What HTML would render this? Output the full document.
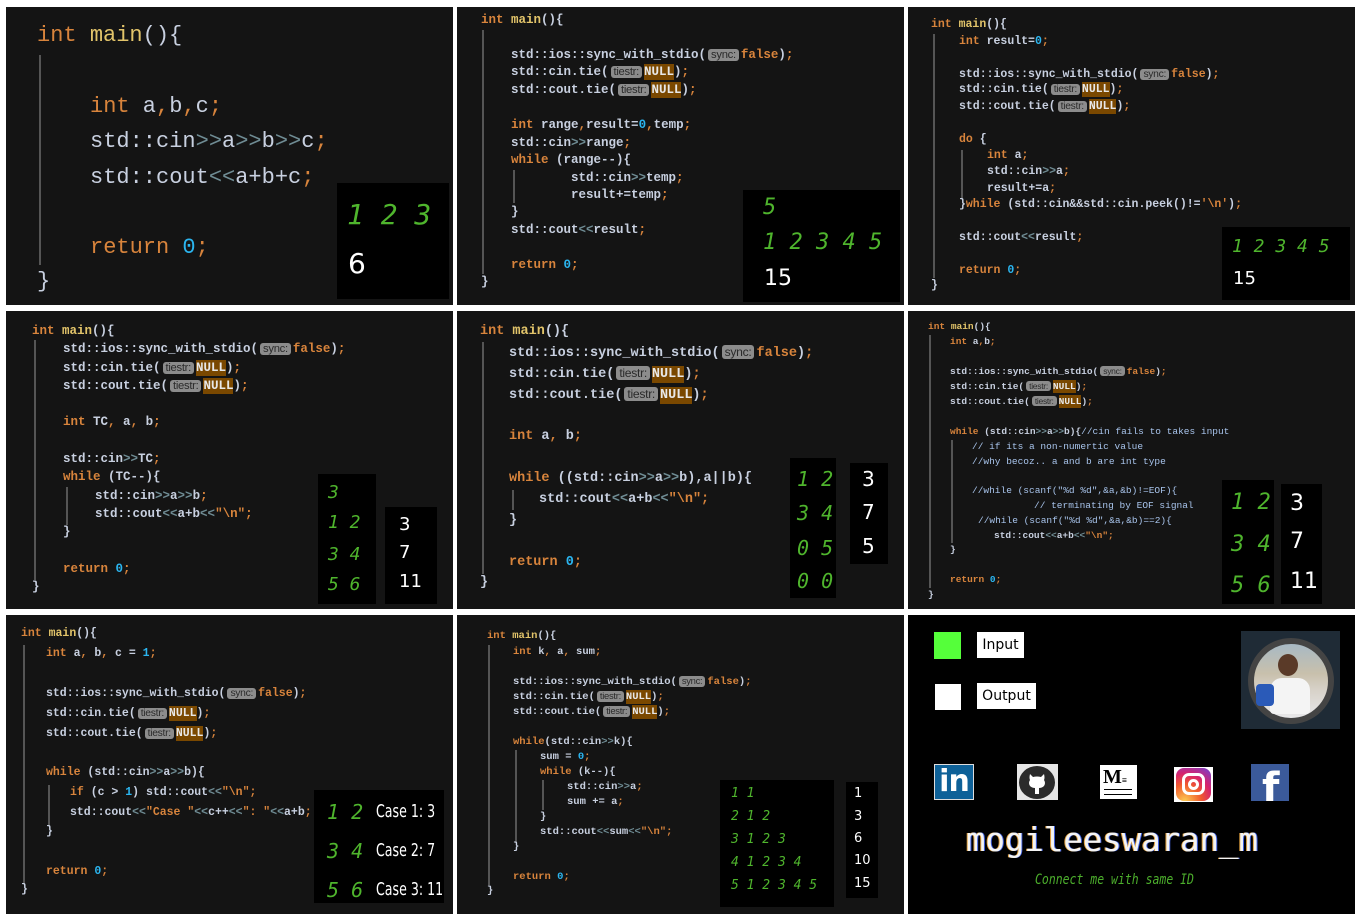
<!DOCTYPE html>
<html><head><meta charset="utf-8"><style>
*{margin:0;padding:0;box-sizing:border-box}
body{width:1358px;height:921px;background:#fff;position:relative;overflow:hidden;font-family:"Liberation Mono",monospace;color:#c8d0e0}
.pn{position:absolute;background:#141414}
.l{position:absolute;white-space:pre;font-family:"Liberation Mono",monospace;font-weight:bold}
.k{color:#d8843c}.f{color:#e2c46a}.o{color:#6f8c94}.n{color:#2bb5ef}.p{color:#d8843c}.c{color:#a8c4ec;font-weight:normal}.g{color:#e2e2e2}
.pill{background:#8c8c8c;color:#2a2a2a;border-radius:3px;font-family:"Liberation Sans",sans-serif;font-weight:normal;font-size:0.9em;padding:0 3px;letter-spacing:-0.3px;margin:0 2px}
.nul{background:#7a4800;color:#e8e8e8;padding:1px 0}
.vl{position:absolute;width:2px;background:#555}
.box{position:absolute;background:#000}
.gr{position:absolute;color:#4fb52d;font-family:"DejaVu Sans Mono",monospace;white-space:pre;font-style:italic}
.wt{position:absolute;color:#fff;font-family:"DejaVu Sans",sans-serif;white-space:pre}
</style></head><body>

<!-- Panel 1 -->
<div class="pn" style="left:6px;top:7px;width:447px;height:298px"></div>
<div class="vl" style="left:39px;top:55px;height:210px"></div>
<div class="l" style="left:37px;top:23px;font-size:22px;font-weight:normal"><span class="k">int</span> <span class="f">main</span>(){</div>
<div class="l" style="left:90px;top:94px;font-size:22px;font-weight:normal"><span class="k">int</span> a<span class="p">,</span>b<span class="p">,</span>c<span class="p">;</span></div>
<div class="l" style="left:90px;top:129px;font-size:22px;font-weight:normal">std::cin<span class="o">&gt;&gt;</span>a<span class="o">&gt;&gt;</span>b<span class="o">&gt;&gt;</span>c<span class="p">;</span></div>
<div class="l" style="left:90px;top:165px;font-size:22px;font-weight:normal">std::cout<span class="o">&lt;&lt;</span>a+b+c<span class="p">;</span></div>
<div class="l" style="left:90px;top:235px;font-size:22px;font-weight:normal"><span class="k">return</span> <span class="n">0</span><span class="p">;</span></div>
<div class="l" style="left:37px;top:269px;font-size:22px;font-weight:normal">}</div>
<div class="box" style="left:337px;top:183px;width:112px;height:116px"></div>
<div class="gr" style="left:347px;top:198px;font-size:28px">1 2 3</div>
<div class="wt" style="left:348px;top:247px;font-size:28px">6</div>

<!-- Panel 2 -->
<div class="pn" style="left:457px;top:7px;width:447px;height:298px"></div>
<div class="vl" style="left:482px;top:30px;height:244px"></div>
<div class="vl" style="left:513px;top:170px;height:33px"></div>
<div style="font-size:12.5px">
<div class="l" style="left:481px;top:13px"><span class="k">int</span> <span class="f">main</span>(){</div>
<div class="l" style="left:511px;top:48px">std::ios::sync_with_stdio(<span class="pill">sync:</span><span class="k">false</span>)<span class="p">;</span></div>
<div class="l" style="left:511px;top:65px">std::cin.tie(<span class="pill">tiestr:</span><span class="nul">NULL</span>)<span class="p">;</span></div>
<div class="l" style="left:511px;top:83px">std::cout.tie(<span class="pill">tiestr:</span><span class="nul">NULL</span>)<span class="p">;</span></div>
<div class="l" style="left:511px;top:118px"><span class="k">int</span> range<span class="p">,</span>result=<span class="n">0</span><span class="p">,</span>temp<span class="p">;</span></div>
<div class="l" style="left:511px;top:136px">std::cin<span class="o">&gt;&gt;</span>range<span class="p">;</span></div>
<div class="l" style="left:511px;top:153px"><span class="k">while</span> (range--){</div>
<div class="l" style="left:571px;top:171px">std::cin<span class="o">&gt;&gt;</span>temp<span class="p">;</span></div>
<div class="l" style="left:571px;top:188px">result+=temp<span class="p">;</span></div>
<div class="l" style="left:511px;top:205px">}</div>
<div class="l" style="left:511px;top:223px">std::cout<span class="o">&lt;&lt;</span>result<span class="p">;</span></div>
<div class="l" style="left:511px;top:258px"><span class="k">return</span> <span class="n">0</span><span class="p">;</span></div>
<div class="l" style="left:481px;top:275px">}</div>
</div>
<div class="box" style="left:743px;top:190px;width:157px;height:112px"></div>
<div class="gr" style="left:763px;top:195px;font-size:22px">5</div>
<div class="gr" style="left:763px;top:230px;font-size:22px">1 2 3 4 5</div>
<div class="wt" style="left:764px;top:266px;font-size:22px">15</div>

<!-- Panel 3 -->
<div class="pn" style="left:908px;top:7px;width:447px;height:298px"></div>
<div class="vl" style="left:933px;top:34px;height:244px"></div>
<div class="vl" style="left:961px;top:150px;height:48px"></div>
<div style="font-size:11.5px">
<div class="l" style="left:931px;top:18px"><span class="k">int</span> <span class="f">main</span>(){</div>
<div class="l" style="left:959px;top:35px"><span class="k">int</span> result=<span class="n">0</span><span class="p">;</span></div>
<div class="l" style="left:959px;top:68px">std::ios::sync_with_stdio(<span class="pill">sync:</span><span class="k">false</span>)<span class="p">;</span></div>
<div class="l" style="left:959px;top:83px">std::cin.tie(<span class="pill">tiestr:</span><span class="nul">NULL</span>)<span class="p">;</span></div>
<div class="l" style="left:959px;top:100px">std::cout.tie(<span class="pill">tiestr:</span><span class="nul">NULL</span>)<span class="p">;</span></div>
<div class="l" style="left:959px;top:133px"><span class="k">do</span> {</div>
<div class="l" style="left:987px;top:149px"><span class="k">int</span> a<span class="p">;</span></div>
<div class="l" style="left:987px;top:165px">std::cin<span class="o">&gt;&gt;</span>a<span class="p">;</span></div>
<div class="l" style="left:987px;top:182px">result+=a<span class="p">;</span></div>
<div class="l" style="left:959px;top:198px">}<span class="k">while</span> (std::cin&amp;&amp;std::cin.peek()!=<span class="p">'\n'</span>)<span class="p">;</span></div>
<div class="l" style="left:959px;top:231px">std::cout<span class="o">&lt;&lt;</span>result<span class="p">;</span></div>
<div class="l" style="left:959px;top:264px"><span class="k">return</span> <span class="n">0</span><span class="p">;</span></div>
<div class="l" style="left:931px;top:279px">}</div>
</div>
<div class="box" style="left:1222px;top:227px;width:128px;height:73px"></div>
<div class="gr" style="left:1232px;top:236px;font-size:18px">1 2 3 4 5</div>
<div class="wt" style="left:1233px;top:268px;font-size:18px">15</div>

<!-- Panel 4 -->
<div class="pn" style="left:6px;top:311px;width:447px;height:298px"></div>
<div class="vl" style="left:34px;top:340px;height:240px"></div>
<div class="vl" style="left:66px;top:487px;height:38px"></div>
<div style="font-size:12.5px">
<div class="l" style="left:32px;top:324px"><span class="k">int</span> <span class="f">main</span>(){</div>
<div class="l" style="left:63px;top:342px">std::ios::sync_with_stdio(<span class="pill">sync:</span><span class="k">false</span>)<span class="p">;</span></div>
<div class="l" style="left:63px;top:361px">std::cin.tie(<span class="pill">tiestr:</span><span class="nul">NULL</span>)<span class="p">;</span></div>
<div class="l" style="left:63px;top:379px">std::cout.tie(<span class="pill">tiestr:</span><span class="nul">NULL</span>)<span class="p">;</span></div>
<div class="l" style="left:63px;top:415px"><span class="k">int</span> TC<span class="p">,</span> a<span class="p">,</span> b<span class="p">;</span></div>
<div class="l" style="left:63px;top:452px">std::cin<span class="o">&gt;&gt;</span>TC<span class="p">;</span></div>
<div class="l" style="left:63px;top:470px"><span class="k">while</span> (TC--){</div>
<div class="l" style="left:95px;top:489px">std::cin<span class="o">&gt;&gt;</span>a<span class="o">&gt;&gt;</span>b<span class="p">;</span></div>
<div class="l" style="left:95px;top:507px">std::cout<span class="o">&lt;&lt;</span>a+b<span class="o">&lt;&lt;</span><span class="p">"\n"</span><span class="p">;</span></div>
<div class="l" style="left:63px;top:525px">}</div>
<div class="l" style="left:63px;top:562px"><span class="k">return</span> <span class="n">0</span><span class="p">;</span></div>
<div class="l" style="left:32px;top:580px">}</div>
</div>
<div class="box" style="left:318px;top:474px;width:58px;height:130px"></div>
<div class="gr" style="left:328px;top:482px;font-size:18px">3</div>
<div class="gr" style="left:328px;top:512px;font-size:18px">1 2</div>
<div class="gr" style="left:328px;top:544px;font-size:18px">3 4</div>
<div class="gr" style="left:328px;top:574px;font-size:18px">5 6</div>
<div class="box" style="left:385px;top:507px;width:52px;height:97px"></div>
<div class="wt" style="left:399px;top:514px;font-size:18px">3</div>
<div class="wt" style="left:399px;top:542px;font-size:18px">7</div>
<div class="wt" style="left:399px;top:571px;font-size:18px">11</div>

<!-- Panel 5 -->
<div class="pn" style="left:457px;top:311px;width:447px;height:298px"></div>
<div class="vl" style="left:482px;top:342px;height:232px"></div>
<div class="vl" style="left:512px;top:490px;height:20px"></div>
<div style="font-size:13.5px">
<div class="l" style="left:480px;top:324px"><span class="k">int</span> <span class="f">main</span>(){</div>
<div class="l" style="left:509px;top:345px">std::ios::sync_with_stdio(<span class="pill">sync:</span><span class="k">false</span>)<span class="p">;</span></div>
<div class="l" style="left:509px;top:366px">std::cin.tie(<span class="pill">tiestr:</span><span class="nul">NULL</span>)<span class="p">;</span></div>
<div class="l" style="left:509px;top:387px">std::cout.tie(<span class="pill">tiestr:</span><span class="nul">NULL</span>)<span class="p">;</span></div>
<div class="l" style="left:509px;top:429px"><span class="k">int</span> a<span class="p">,</span> b<span class="p">;</span></div>
<div class="l" style="left:509px;top:471px"><span class="k">while</span> ((std::cin<span class="o">&gt;&gt;</span>a<span class="o">&gt;&gt;</span>b),a||b){</div>
<div class="l" style="left:539px;top:492px">std::cout<span class="o">&lt;&lt;</span>a+b<span class="o">&lt;&lt;</span><span class="p">"\n"</span><span class="p">;</span></div>
<div class="l" style="left:509px;top:513px">}</div>
<div class="l" style="left:509px;top:555px"><span class="k">return</span> <span class="n">0</span><span class="p">;</span></div>
<div class="l" style="left:480px;top:575px">}</div>
</div>
<div class="box" style="left:790px;top:458px;width:46px;height:140px"></div>
<div class="gr" style="left:797px;top:467px;font-size:20px">1 2</div>
<div class="gr" style="left:797px;top:501px;font-size:20px">3 4</div>
<div class="gr" style="left:797px;top:536px;font-size:20px">0 5</div>
<div class="gr" style="left:797px;top:569px;font-size:20px">0 0</div>
<div class="box" style="left:850px;top:463px;width:38px;height:101px"></div>
<div class="wt" style="left:862px;top:467px;font-size:20px">3</div>
<div class="wt" style="left:862px;top:500px;font-size:20px">7</div>
<div class="wt" style="left:862px;top:534px;font-size:20px">5</div>

<!-- Panel 6 -->
<div class="pn" style="left:908px;top:311px;width:447px;height:298px"></div>
<div class="vl" style="left:929px;top:335px;height:253px"></div>
<div class="vl" style="left:951px;top:440px;height:103px"></div>
<div style="font-size:9.5px">
<div class="l" style="left:928px;top:321px"><span class="k">int</span> <span class="f">main</span>(){</div>
<div class="l" style="left:950px;top:336px"><span class="k">int</span> a<span class="p">,</span>b<span class="p">;</span></div>
<div class="l" style="left:950px;top:366px">std::ios::sync_with_stdio(<span class="pill">sync:</span><span class="k">false</span>)<span class="p">;</span></div>
<div class="l" style="left:950px;top:381px">std::cin.tie(<span class="pill">tiestr:</span><span class="nul">NULL</span>)<span class="p">;</span></div>
<div class="l" style="left:950px;top:396px">std::cout.tie(<span class="pill">tiestr:</span><span class="nul">NULL</span>)<span class="p">;</span></div>
<div class="l" style="left:950px;top:426px"><span class="k">while</span> (std::cin<span class="o">&gt;&gt;</span>a<span class="o">&gt;&gt;</span>b){<span class="c">//cin fails to takes input</span></div>
<div class="l c" style="left:972px;top:441px">// if its a non-numertic value</div>
<div class="l c" style="left:972px;top:456px">//why becoz.. a and b are int type</div>
<div class="l c" style="left:972px;top:485px">//while (scanf("%d %d",&amp;a,&amp;b)!=EOF){</div>
<div class="l c" style="left:1034px;top:500px">// terminating by EOF signal</div>
<div class="l c" style="left:978px;top:515px">//while (scanf("%d %d",&amp;a,&amp;b)==2){</div>
<div class="l" style="left:994px;top:530px">std::cout<span class="o">&lt;&lt;</span>a+b<span class="o">&lt;&lt;</span><span class="p">"\n"</span><span class="p">;</span></div>
<div class="l" style="left:950px;top:544px">}</div>
<div class="l" style="left:950px;top:574px"><span class="k">return</span> <span class="n">0</span><span class="p">;</span></div>
<div class="l" style="left:928px;top:589px">}</div>
</div>
<div class="box" style="left:1222px;top:480px;width:52px;height:124px"></div>
<div class="gr" style="left:1231px;top:490px;font-size:22px">1 2</div>
<div class="gr" style="left:1231px;top:532px;font-size:22px">3 4</div>
<div class="gr" style="left:1231px;top:573px;font-size:22px">5 6</div>
<div class="box" style="left:1281px;top:484px;width:41px;height:120px"></div>
<div class="wt" style="left:1290px;top:491px;font-size:22px">3</div>
<div class="wt" style="left:1290px;top:529px;font-size:22px">7</div>
<div class="wt" style="left:1290px;top:569px;font-size:22px">11</div>

<!-- Panel 7 -->
<div class="pn" style="left:6px;top:615px;width:447px;height:299px"></div>
<div class="vl" style="left:23px;top:645px;height:238px"></div>
<div class="vl" style="left:48px;top:785px;height:40px"></div>
<div style="font-size:11.5px">
<div class="l" style="left:21px;top:627px"><span class="k">int</span> <span class="f">main</span>(){</div>
<div class="l" style="left:46px;top:647px"><span class="k">int</span> a<span class="p">,</span> b<span class="p">,</span> c = <span class="n">1</span><span class="p">;</span></div>
<div class="l" style="left:46px;top:687px">std::ios::sync_with_stdio(<span class="pill">sync:</span><span class="k">false</span>)<span class="p">;</span></div>
<div class="l" style="left:46px;top:707px">std::cin.tie(<span class="pill">tiestr:</span><span class="nul">NULL</span>)<span class="p">;</span></div>
<div class="l" style="left:46px;top:727px">std::cout.tie(<span class="pill">tiestr:</span><span class="nul">NULL</span>)<span class="p">;</span></div>
<div class="l" style="left:46px;top:766px"><span class="k">while</span> (std::cin<span class="o">&gt;&gt;</span>a<span class="o">&gt;&gt;</span>b){</div>
<div class="l" style="left:70px;top:786px"><span class="k">if</span> (c &gt; <span class="n">1</span>) std::cout<span class="o">&lt;&lt;</span><span class="p">"\n"</span><span class="p">;</span></div>
<div class="l" style="left:70px;top:806px">std::cout<span class="o">&lt;&lt;</span><span class="p">"Case "</span><span class="o">&lt;&lt;</span>c++<span class="o">&lt;&lt;</span><span class="p">": "</span><span class="o">&lt;&lt;</span>a+b<span class="p">;</span></div>
<div class="l" style="left:46px;top:825px">}</div>
<div class="l" style="left:46px;top:865px"><span class="k">return</span> <span class="n">0</span><span class="p">;</span></div>
<div class="l" style="left:21px;top:883px">}</div>
</div>
<div class="box" style="left:314px;top:790px;width:130px;height:113px"></div>
<div class="gr" style="left:327px;top:800px;font-size:20px">1 2</div>
<div class="gr" style="left:327px;top:839px;font-size:20px">3 4</div>
<div class="gr" style="left:327px;top:878px;font-size:20px">5 6</div>
<div class="wt" style="left:376px;top:801px;font-size:18px;transform:scaleX(.7);transform-origin:left">Case 1: 3</div>
<div class="wt" style="left:376px;top:840px;font-size:18px;transform:scaleX(.7);transform-origin:left">Case 2: 7</div>
<div class="wt" style="left:376px;top:879px;font-size:18px;transform:scaleX(.7);transform-origin:left">Case 3: 11</div>

<!-- Panel 8 -->
<div class="pn" style="left:457px;top:615px;width:447px;height:299px"></div>
<div class="vl" style="left:488px;top:645px;height:240px"></div>
<div class="vl" style="left:515px;top:750px;height:92px"></div>
<div class="vl" style="left:542px;top:780px;height:30px"></div>
<div style="font-size:10.5px">
<div class="l" style="left:487px;top:630px"><span class="k">int</span> <span class="f">main</span>(){</div>
<div class="l" style="left:513px;top:646px"><span class="k">int</span> k<span class="p">,</span> a<span class="p">,</span> sum<span class="p">;</span></div>
<div class="l" style="left:513px;top:676px">std::ios::sync_with_stdio(<span class="pill">sync:</span><span class="k">false</span>)<span class="p">;</span></div>
<div class="l" style="left:513px;top:691px">std::cin.tie(<span class="pill">tiestr:</span><span class="nul">NULL</span>)<span class="p">;</span></div>
<div class="l" style="left:513px;top:706px">std::cout.tie(<span class="pill">tiestr:</span><span class="nul">NULL</span>)<span class="p">;</span></div>
<div class="l" style="left:513px;top:736px"><span class="k">while</span>(std::cin<span class="o">&gt;&gt;</span>k){</div>
<div class="l" style="left:540px;top:751px">sum = <span class="n">0</span><span class="p">;</span></div>
<div class="l" style="left:540px;top:766px"><span class="k">while</span> (k--){</div>
<div class="l" style="left:567px;top:781px">std::cin<span class="o">&gt;&gt;</span>a<span class="p">;</span></div>
<div class="l" style="left:567px;top:796px">sum += a<span class="p">;</span></div>
<div class="l" style="left:540px;top:811px">}</div>
<div class="l" style="left:540px;top:826px">std::cout<span class="o">&lt;&lt;</span>sum<span class="o">&lt;&lt;</span><span class="p">"\n"</span><span class="p">;</span></div>
<div class="l" style="left:513px;top:841px">}</div>
<div class="l" style="left:513px;top:871px"><span class="k">return</span> <span class="n">0</span><span class="p">;</span></div>
<div class="l" style="left:487px;top:885px">}</div>
</div>
<div class="box" style="left:720px;top:780px;width:114px;height:127px"></div>
<div class="gr" style="left:731px;top:786px;font-size:13px">1 1</div>
<div class="gr" style="left:731px;top:809px;font-size:13px">2 1 2</div>
<div class="gr" style="left:731px;top:832px;font-size:13px">3 1 2 3</div>
<div class="gr" style="left:731px;top:855px;font-size:13px">4 1 2 3 4</div>
<div class="gr" style="left:731px;top:878px;font-size:13px">5 1 2 3 4 5</div>
<div class="box" style="left:846px;top:782px;width:32px;height:116px"></div>
<div class="wt" style="left:854px;top:786px;font-size:13px">1</div>
<div class="wt" style="left:854px;top:809px;font-size:13px">3</div>
<div class="wt" style="left:854px;top:831px;font-size:13px">6</div>
<div class="wt" style="left:854px;top:853px;font-size:13px">10</div>
<div class="wt" style="left:854px;top:876px;font-size:13px">15</div>

<!-- Panel 9 -->
<div style="position:absolute;left:908px;top:615px;width:447px;height:299px;background:#000"></div>
<div style="position:absolute;left:934px;top:632px;width:27px;height:27px;background:#55ff3a"></div>
<div style="position:absolute;left:977px;top:632px;width:47px;height:26px;background:#fff;color:#000;font-family:'DejaVu Sans',sans-serif;font-size:14px;line-height:26px;text-align:center">Input</div>
<div style="position:absolute;left:935px;top:684px;width:26px;height:26px;background:#fff"></div>
<div style="position:absolute;left:977px;top:683px;width:59px;height:26px;background:#fff;color:#000;font-family:'DejaVu Sans',sans-serif;font-size:14px;line-height:26px;text-align:center">Output</div>
<div style="position:absolute;left:1241px;top:631px;width:99px;height:98px;background:#1f2b36"></div>
<div style="position:absolute;left:1248px;top:638px;width:86px;height:86px;border-radius:50%;border:6px solid #444;background:linear-gradient(180deg,#a8b9c4 0%,#c8c0ac 40%,#d6d0c6 60%,#e8e8ea 100%)"></div>
<div style="position:absolute;left:1278px;top:654px;width:20px;height:22px;border-radius:50%;background:#5a3a28"></div>
<div style="position:absolute;left:1270px;top:678px;width:40px;height:36px;border-radius:12px 12px 4px 4px;background:#f4f4f4"></div>
<div style="position:absolute;left:1256px;top:684px;width:18px;height:22px;background:#2a5ab8;border-radius:4px"></div>
<!-- icons -->
<div style="position:absolute;left:934px;top:764px;width:40px;height:36px;background:#0e6198;border:1px solid #ddd;color:#fff;font-family:'DejaVu Sans',sans-serif;font-weight:bold;font-size:30px;line-height:34px;text-align:center;letter-spacing:-1px">in</div>
<div style="position:absolute;left:1017px;top:764px;width:41px;height:36px;background:#e6e6e6"></div>
<div style="position:absolute;left:1019px;top:766px;width:36px;height:33px;border-radius:50%;background:#2b2b2b"></div>
<svg style="position:absolute;left:1026px;top:771px" width="22" height="24" viewBox="0 0 22 24"><path d="M4 3 L7 6 Q11 5 15 6 L18 3 Q19 7 18 9 Q20 12 18 15 Q16 17 13 17 L13 23 L9 23 L9 17 Q6 17 4 15 Q2 12 4 9 Q3 7 4 3Z" fill="#fff"/></svg>
<div style="position:absolute;left:1100px;top:765px;width:37px;height:34px;background:#fff;color:#000;font-family:'Liberation Serif',serif;font-weight:bold;font-size:20px;line-height:24px;padding-left:3px">M<span style="font-size:9px">≡</span></div>
<div style="position:absolute;left:1104px;top:789px;width:28px;height:6px;border-top:1px solid #000;border-bottom:1px solid #000"></div>
<div style="position:absolute;left:1174px;top:767px;width:39px;height:35px;background:#fff"></div>
<div style="position:absolute;left:1176px;top:768px;width:35px;height:33px;border-radius:8px;background:radial-gradient(circle at 25% 100%,#fdcb52 0%,#f0582e 40%,#d6246e 65%,#8a3ab9 90%)"></div>
<div style="position:absolute;left:1182px;top:773px;width:23px;height:22px;border:3px solid #fff;border-radius:7px"></div>
<div style="position:absolute;left:1188px;top:779px;width:11px;height:11px;border:3px solid #fff;border-radius:50%"></div>
<div style="position:absolute;left:1251px;top:764px;width:38px;height:37px;background:#3b5a9a;overflow:hidden"><div style="position:absolute;left:11px;top:4px;color:#fff;font-family:'DejaVu Sans',sans-serif;font-weight:bold;font-size:40px;line-height:40px">f</div></div>
<div style="position:absolute;left:966px;top:820px;color:#f4f4f4;font-family:'DejaVu Sans Mono',monospace;font-size:33px;line-height:40px;text-shadow:-1px 0 #e0a040,1px 0 #4060e0;transform:scaleX(.98);transform-origin:left">mogileeswaran_m</div>
<div style="position:absolute;left:1035px;top:872px;color:#4cae2c;font-family:'DejaVu Sans Mono',monospace;font-style:italic;font-size:14px;transform:scaleX(.82);transform-origin:left;white-space:pre">Connect me with same ID</div>
</body></html>
